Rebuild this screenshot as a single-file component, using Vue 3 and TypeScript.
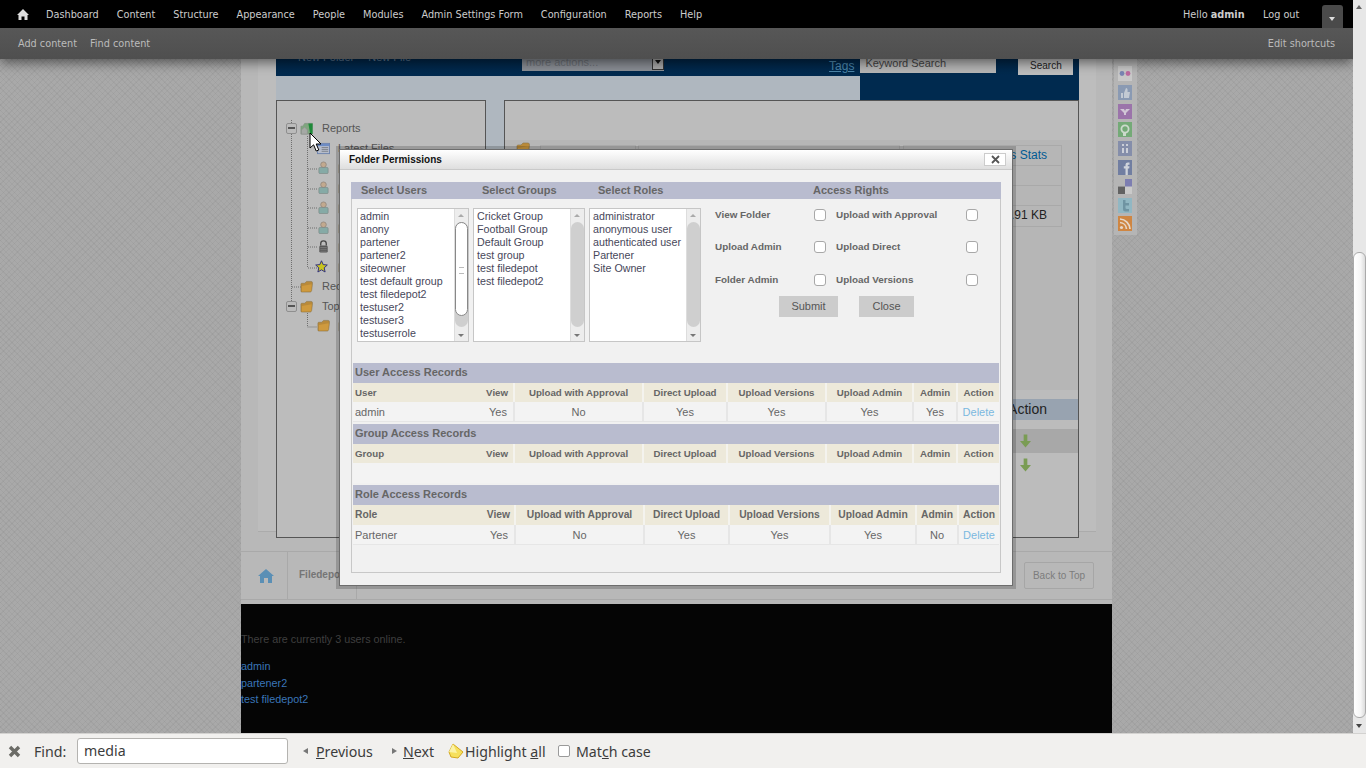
<script setup lang="ts">
const menu = ['Dashboard', 'Content', 'Structure', 'Appearance', 'People', 'Modules', 'Admin Settings Form', 'Configuration', 'Reports', 'Help']
const users = ['admin', 'anony', 'partener', 'partener2', 'siteowner', 'test default group', 'test filedepot2', 'testuser2', 'testuser3', 'testuserrole']
const groups = ['Cricket Group', 'Football Group', 'Default Group', 'test group', 'test filedepot', 'test filedepot2']
const roles = ['administrator', 'anonymous user', 'authenticated user', 'Partener', 'Site Owner']
const lists = [
  { items: users, active: true },
  { items: groups, active: false },
  { items: roles, active: false },
]
const rights = ['View Folder', 'Upload with Approval', 'Upload Admin', 'Upload Direct', 'Folder Admin', 'Upload Versions']
const cols = ['View', 'Upload with Approval', 'Direct Upload', 'Upload Versions', 'Upload Admin', 'Admin', 'Action']
const tables = [
  { cls: 't-user', title: 'User Access Records', first: 'User', row: ['admin', 'Yes', 'No', 'Yes', 'Yes', 'Yes', 'Yes'] },
  { cls: 't-group', title: 'Group Access Records', first: 'Group', row: null },
  { cls: 't-role', title: 'Role Access Records', first: 'Role', row: ['Partener', 'Yes', 'No', 'Yes', 'Yes', 'Yes', 'No'] },
]
const tree = [
  { cls: 'lv0', toggle: true, icon: 'i-report', label: 'Reports' },
  { cls: 'lv1', toggle: false, icon: 'i-list', label: 'Latest Files' },
  { cls: 'lv1', toggle: false, icon: 'i-user', label: '' },
  { cls: 'lv1', toggle: false, icon: 'i-user', label: '' },
  { cls: 'lv1', toggle: false, icon: 'i-user', label: '' },
  { cls: 'lv1', toggle: false, icon: 'i-user', label: '' },
  { cls: 'lv1', toggle: false, icon: 'i-lock', label: '' },
  { cls: 'lv1', toggle: false, icon: 'i-star', label: '' },
  { cls: 'lv0', toggle: false, icon: 'i-folder', label: 'Recent' },
  { cls: 'lv0', toggle: true, icon: 'i-folder', label: 'Top' },
  { cls: 'lv1', toggle: false, icon: 'i-folder', label: '' },
]
const socials = ['s-flickr', 's-like', 's-yahoo', 's-green', 's-blue', 's-fb', 's-del', 's-tw', 's-rss']
</script>

<template>
  <div class="root">
    <svg class="defs" aria-hidden="true">
      <defs>
        <symbol id="i-folder" viewBox="0 0 14 13">
          <path d="M1 4 L1 11.5 Q1 12.5 2 12.5 L11 12.5 Q12 12.5 12.5 11 L13.5 3 Q13.5 1 12 1 L7 1 L5 3 L2 3 Q1 3 1 4Z" fill="#b98a3a" stroke="#8a7448" stroke-width=".6" />
          <path d="M2 6 L12.6 4 L12 11.5 L2 11.8Z" fill="#cf9a3e" />
        </symbol>
        <symbol id="i-user" viewBox="0 0 12 14">
          <circle cx="6" cy="4" r="3" fill="#c2a98f" stroke="#8c8378" stroke-width=".8" />
          <rect x="1" y="7" width="10" height="6.5" rx="1" fill="#86aaa6" stroke="#77827f" stroke-width=".6" />
        </symbol>
        <symbol id="i-lock" viewBox="0 0 12 14">
          <path d="M3 6 V4 a3 3 0 0 1 6 0 V6" fill="none" stroke="#444" stroke-width="1.4" />
          <rect x="1.5" y="6" width="9" height="7.5" rx="1.5" fill="#555" />
          <path d="M2.5 8 H9.5 M2.5 10 H9.5 M2.5 12 H9.5" stroke="#979797" stroke-width=".6" />
        </symbol>
        <symbol id="i-star" viewBox="0 0 13 13">
          <path d="M6.5 .8 L8.2 4.6 L12.3 5 L9.2 7.8 L10.1 12 L6.5 9.8 L2.9 12 L3.8 7.8 L.7 5 L4.8 4.6Z" fill="#c9c41e" stroke="#33337e" stroke-width="1" />
        </symbol>
        <symbol id="i-list" viewBox="0 0 14 12">
          <rect x=".5" y=".5" width="13" height="11" fill="#b5bccb" stroke="#6d83ad" />
          <rect x="1" y="1" width="12" height="2.4" fill="#6d8cc4" />
          <path d="M5 5 H12 M5 7 H12 M5 9 H12" stroke="#6c7076" stroke-width=".8" />
        </symbol>
        <symbol id="i-report" viewBox="0 0 14 13">
          <path d="M1 4 L1 12.5 L13 12.5 L13.5 1 L5 1 L3 4Z" fill="#7ea67e" stroke="#7a8c7a" stroke-width=".6" />
          <path d="M9 1 H13.5 V12.5 H11 Z" fill="#1f8a3a" />
          <path d="M1.5 8 L5 5 L8 8 V12.5 H1.5Z" fill="#a5a9a5" stroke="#8c8c8c" stroke-width=".6" />
        </symbol>
      </defs>
    </svg>

    <div class="viewport">
      <div class="page">
        <div class="col">
          <div class="frame">
            <div class="head">
              <span class="head-link">New Folder</span>
              <span class="head-link second">New File</span>
              <span class="head-select">more actions...<b class="select-arrow"></b></span>
              <a class="tags">Tags</a>
              <span class="keyword">Keyword Search</span>
              <span class="search-btn">Search</span>
            </div>
            <div class="mid">
              <div class="mid-top"><div class="navy-block"></div></div>
              <div class="panels">
                <div class="panel-left">
                  <svg class="tree-lines" width="60" height="240" aria-hidden="true">
                    <g fill="none" stroke="#6f6f6f" stroke-dasharray="1 1">
                      <path d="M14.5 19 V205" />
                      <path d="M30.5 35 V167 M31 68 H40 M31 88 H40 M31 107 H40 M31 127 H40 M31 146 H40 M31 167 H40" />
                      <path d="M15 186 H24 M30.5 212 V226 H40" />
                    </g>
                  </svg>
                  <div v-for="(n, i) in tree" :key="i" class="node" :class="n.cls">
                    <span v-if="n.cls === 'lv0'" class="toggle-slot"><span v-if="n.toggle" class="toggle"></span></span>
                    <svg class="node-icon" :class="n.icon"><use :href="'#' + n.icon" /></svg>
                    <span v-if="n.label" class="node-label">{{ n.label }}</span>
                    <svg v-else-if="n.cls === 'lv1'" class="node-folder"><use href="#i-folder" /></svg>
                  </div>
                </div>
                <div class="panel-right">
                  <div class="files">
                    <div class="file-head">
                      <svg class="file-folder"><use href="#i-folder" /></svg>
                      <span class="c1"></span><span class="c2"></span>
                      <div class="stats">
                        <a class="stat-row">Users Stats</a>
                        <div class="stat-row"></div>
                        <div class="stat-row"></div>
                        <div class="stat-row dark">36.91 KB</div>
                      </div>
                    </div>
                  </div>
                  <div class="actions">
                    <div class="action-head"><span>Action</span></div>
                    <div class="action-row hl"><svg class="arrow" viewBox="0 0 12 14"><path d="M4 0 H8 V7 H12 L6 14 L0 7 H4Z" fill="#7a9c54" /></svg></div>
                    <div class="action-row"><svg class="arrow" viewBox="0 0 12 14"><path d="M4 0 H8 V7 H12 L6 14 L0 7 H4Z" fill="#7a9c54" /></svg></div>
                  </div>
                </div>
              </div>
            </div>
          </div>

          <div class="footbar">
            <div class="foot-home">
              <svg width="16" height="14" viewBox="0 0 16 14"><path d="M8 0 L16 7 H14 V14 H10 V9 H6 V14 H2 V7 H0Z" fill="#5a8fb5" /></svg>
            </div>
            <div class="foot-crumb">Filedepot</div>
            <span class="back-top">Back to Top</span>
          </div>

          <div class="black">
            <p class="online">There are currently 3 users online.</p>
            <a class="user-link">admin</a>
            <a class="user-link">partener2</a>
            <a class="user-link">test filedepot2</a>
          </div>
        </div>

        <div class="social">
          <svg v-for="s in socials" :key="s" class="soc" viewBox="0 0 14 15">
            <template v-if="s === 's-flickr'">
              <rect width="14" height="15" fill="#cfcfcf" /><circle cx="4" cy="7.5" r="2.4" fill="#6a79b4" /><circle cx="10" cy="7.5" r="2.4" fill="#c0569b" />
            </template>
            <template v-else-if="s === 's-like'">
              <rect width="14" height="15" fill="#7f93b3" /><path d="M3 8 H5 V13 H3Z M6 8 L8 3 Q10 3 9.5 7 H12 L11 13 H6Z" fill="#c7d0dc" />
            </template>
            <template v-else-if="s === 's-yahoo'">
              <rect width="14" height="15" fill="#9463a8" /><path d="M2 5 H6 L7 7 L8 5 H12 L8 9 V11 H6 V9Z" fill="#d9cde0" />
            </template>
            <template v-else-if="s === 's-green'">
              <rect width="14" height="15" fill="#62a866" /><circle cx="7" cy="7" r="3.6" fill="none" stroke="#d3e5d3" stroke-width="1.8" /><path d="M5 11 H8 V14 H5Z" fill="#d3e5d3" />
            </template>
            <template v-else-if="s === 's-blue'">
              <rect width="14" height="15" fill="#7884a8" /><path d="M4 3 H6 V5 H4Z M8 3 H10 V5 H8Z M4 7 H6 V12 H4Z M8 7 H10 V12 H8Z" fill="#d3d7e2" />
            </template>
            <template v-else-if="s === 's-fb'">
              <rect width="14" height="15" fill="#5e6f9c" /><path d="M7.5 15 V8.5 H5.8 V6.2 H7.5 V4.5 Q7.5 2.5 9.8 2.5 H11.5 V4.7 H10.4 Q9.8 4.7 9.8 5.3 V6.2 H11.5 L11.2 8.5 H9.8 V15Z" fill="#d7dce6" />
            </template>
            <template v-else-if="s === 's-del'">
              <rect width="14" height="15" fill="#d0d0d0" /><rect x="7" width="7" height="7.5" fill="#6e6fb0" /><rect y="0" width="7" height="7.5" fill="#b5b5b5" /><rect y="7.5" width="7" height="7.5" fill="#4c4c4c" />
            </template>
            <template v-else-if="s === 's-tw'">
              <rect width="14" height="15" fill="#88b8c8" /><path d="M5 2 H7.5 V5 H11 V7.5 H7.5 V10 Q7.5 11 9 11 H11 V13.5 H7.5 Q5 13.5 5 11Z" fill="#5c8c9e" />
            </template>
            <template v-else>
              <rect width="14" height="15" fill="#d77a22" /><circle cx="3.5" cy="11.5" r="1.6" fill="#f5e3d0" /><path d="M2 6.5 A7 7 0 0 1 8.5 13 M2 3 A10.5 10.5 0 0 1 12 13" fill="none" stroke="#f5e3d0" stroke-width="1.7" />
            </template>
          </svg>
        </div>

        <header class="toolbar">
          <div class="bar-top">
            <svg class="home" width="12" height="11" viewBox="0 0 12 11"><path d="M6 0 L12 6 H10.5 V11 H7.5 V7.5 H4.5 V11 H1.5 V6 H0Z" fill="#ddd" /></svg>
            <nav class="menu"><a v-for="m in menu" :key="m">{{ m }}</a></nav>
            <span class="hello">Hello <b>admin</b></span>
            <a class="logout">Log out</a>
            <span class="drawer"><i></i></span>
          </div>
          <div class="bar-sub">
            <a>Add content</a>
            <a>Find content</a>
            <a class="edit">Edit shortcuts</a>
          </div>
        </header>

        <section class="modal">
          <div class="m-title">
            <span>Folder Permissions</span>
            <span class="m-close">
              <svg width="9" height="9" viewBox="0 0 9 9"><path d="M1 1 L8 8 M8 1 L1 8" stroke="#555" stroke-width="1.8" /></svg>
            </span>
          </div>
          <div class="fieldset">
            <div class="sel-head">
              <span class="h1">Select Users</span>
              <span class="h2">Select Groups</span>
              <span class="h3">Select Roles</span>
              <span class="h4">Access Rights</span>
            </div>
            <div class="form">
              <div v-for="(l, i) in lists" :key="i" class="listbox" :class="{ 'lb-users': i === 0 }">
                <ul>
                  <li v-for="it in l.items" :key="it">{{ it }}</li>
                </ul>
                <div class="sb">
                  <span class="sb-btn up"></span>
                  <span class="sb-track" :class="{ active: l.active }"><span class="sb-thumb"></span></span>
                  <span class="sb-btn down"></span>
                </div>
              </div>
              <div class="rights">
                <div class="rights-grid">
                  <template v-for="r in rights" :key="r">
                    <label>{{ r }}</label>
                    <input type="checkbox" />
                  </template>
                </div>
                <div class="btns">
                  <span class="btn">Submit</span>
                  <span class="btn close">Close</span>
                </div>
              </div>
            </div>
            <div class="records">
              <div v-for="t in tables" :key="t.title" class="record" :class="t.cls">
                <div class="rec-title">{{ t.title }}</div>
                <table>
                  <colgroup><col /><col /><col /><col /><col /><col /><col /></colgroup>
                  <thead>
                    <tr>
                      <th class="first"><span class="fname">{{ t.first }}</span><span class="view">{{ cols[0] }}</span></th>
                      <th v-for="c in cols.slice(1)" :key="c">{{ c }}</th>
                    </tr>
                  </thead>
                  <tbody>
                    <tr v-if="t.row">
                      <td class="first"><span class="fname">{{ t.row[0] }}</span><span class="view">{{ t.row[1] }}</span></td>
                      <td>{{ t.row[2] }}</td>
                      <td>{{ t.row[3] }}</td>
                      <td>{{ t.row[4] }}</td>
                      <td>{{ t.row[5] }}</td>
                      <td>{{ t.row[6] }}</td>
                      <td><a class="del">Delete</a></td>
                    </tr>
                    <tr v-else class="empty"><td colspan="7"></td></tr>
                  </tbody>
                </table>
              </div>
            </div>
          </div>
        </section>

        <svg class="cursor" width="14" height="21" viewBox="0 0 14 21">
          <path d="M1 1 V16 L4.6 12.8 L7.2 19 L9.8 18 L7.2 12 H12Z" fill="#fff" stroke="#000" stroke-width="1" />
        </svg>
      </div>

      <div class="vscroll">
        <span class="vs-btn"><i class="up-tri"></i></span>
        <span class="vs-track"><span class="vs-thumb"></span></span>
        <span class="vs-btn"><i class="down-tri"></i></span>
      </div>
    </div>

    <footer class="findbar">
      <svg class="fx" width="13" height="13" viewBox="0 0 13 13"><path d="M2 2 L11 11 M11 2 L2 11" stroke="#6b6b66" stroke-width="3.4" /></svg>
      <span class="find-label">Find:</span>
      <span class="find-input">media</span>
      <i class="tri-l"></i>
      <span class="fb p"><u>P</u>revious</span>
      <i class="tri-r"></i>
      <span class="fb n"><u>N</u>ext</span>
      <svg class="hl" width="17" height="17" viewBox="0 0 17 17"><path d="M5 1 L15 9 L10 15 L3 14 L1 9Z" fill="#f6e05c" stroke="#d4a820" stroke-width="1" /><path d="M5 1 L1 9 L9 10Z" fill="#fbf3a8" /></svg>
      <span class="fb h">Highlight <u>a</u>ll</span>
      <span class="fcheck"></span>
      <span class="fb m">Mat<u>c</u>h case</span>
    </footer>
  </div>
</template>

<style>
html, body { margin: 0; overflow: hidden; }
</style>

<style scoped>
.root { width: 1366px; height: 768px; display: flex; flex-direction: column; overflow: hidden; font-family: "Liberation Sans", Arial, sans-serif; color: #666; }
.defs { width: 0; height: 0; position: absolute; }
a { cursor: pointer; }
.viewport { height: 733px; display: flex; }
.page {
  position: relative; width: 1353px; height: 733px; display: flex; padding-left: 241px; box-sizing: border-box; overflow: hidden;
  background-color: #a9a9a9;
  background-image: repeating-linear-gradient(45deg, rgba(0,0,0,.035) 0 1px, transparent 1px 4px), repeating-linear-gradient(-45deg, rgba(0,0,0,.035) 0 1px, transparent 1px 4px);
}
.col { width: 871px; height: 733px; display: flex; flex-direction: column; background: #b8b8b8; flex: none; }
.frame { height: 532px; margin: 0 16px 0 17px; padding: 0 17px 0 18px; background: #bdbdbd; border-bottom: 1px solid #ababab; box-sizing: border-box; flex: none; }
.head { height: 76px; width: 803px; background: linear-gradient(#021a33, #002a4f); display: flex; align-items: flex-end; position: relative; font-size: 11px; color: #5d7690; box-sizing: border-box; }
.head-link { margin: 0 0 13px 22px; }
.head-link.second { margin-left: 14px; }
.head-select { width: 142px; height: 16px; margin: 0 0 5px 111px; background: #8b8f96; color: #6d7178; font-size: 11px; line-height: 14px; padding-left: 4px; box-sizing: border-box; position: relative; }
.select-arrow { position: absolute; right: 0; top: 0; width: 12px; height: 15px; background: #a9a9a9; border: 1px solid #333; border-top: 0; box-sizing: border-box; }
.select-arrow::after { content: ""; position: absolute; left: 2px; top: 5px; border: 3px solid transparent; border-top: 4px solid #111; }
.tags { margin: 0 6px 3px 165px; color: #4c86ab; text-decoration: underline; font-size: 12px; }
.keyword { width: 136px; height: 20px; margin-bottom: 3px; background: #b7b7b7; color: #444; font-size: 11px; line-height: 20px; box-sizing: border-box; padding: 0 5px; }
.search-btn { width: 55px; height: 22px; margin: 0 0 1px 22px; background: #bdbdbd; color: #222; font-size: 10px; line-height: 24px; text-align: center; border-top: 1px solid #ddd; box-sizing: border-box; }
.mid { height: 462px; width: 803px; background: #afb7bf; display: flex; flex-direction: column; position: relative; }
.mid-top { height: 24px; display: flex; justify-content: flex-end; flex: none; }
.navy-block { width: 219px; background: #002a4f; }
.panels { height: 438px; display: flex; gap: 18px; flex: none; }
.panel-left { width: 210px; border: 1px solid #555; background: #bcbcbc; box-sizing: border-box; padding-top: 17.5px; position: relative; }
.tree-lines { position: absolute; left: 0; top: 0; }
.node { height: 19.75px; display: flex; align-items: center; position: relative; font-size: 11px; color: #555; white-space: nowrap; }
.node.lv0 { padding-left: 9px; }
.node.lv1 { padding-left: 40px; }
.toggle-slot { width: 11px; height: 11px; margin-right: 3px; flex: none; }
.toggle { display: block; width: 11px; height: 11px; background: #bbb; border: 1px solid #8f8f8f; border-radius: 2px; box-sizing: border-box; position: relative; }
.toggle::after { content: ""; position: absolute; left: 1px; right: 1px; top: 3.5px; height: 2px; background: #555; }
.node-icon { width: 13px; height: 13px; flex: none; }
.node-icon.i-star { margin-left: -2px; margin-right: 2px; }
.node-label { margin-left: 9px; }
.lv1 .node-label { margin-left: 8px; }
.lv0 .node-label { margin-left: 9px; }
.node-folder { width: 14px; height: 13px; margin-left: 8px; flex: none; }
.panel-right { width: 575px; border: 1px solid #555; background: #bcbcbc; box-sizing: border-box; padding-top: 39px; }
.files { height: 250px; background: #b6b6b6; box-sizing: border-box; padding: 2px 16px 0 11px; }
.file-head { display: flex; align-items: flex-start; }
.file-folder { width: 14px; height: 13px; flex: none; margin-right: 10px; }
.c1 { width: 96px; height: 21px; margin-top: 3px; background: #b8b8b8; border: 1px solid #a9a9a9; box-sizing: border-box; flex: none; }
.c2 { width: 262px; height: 21px; margin: 3px 3px 0 2px; background: #b8b8b8; border: 1px solid #a9a9a9; box-sizing: border-box; flex: none; }
.stats { width: 159px; margin-top: 3px; flex: none; border: 1px solid #a9a9a9; box-sizing: border-box; }
.stat-row { display: block; height: 20px; border-bottom: 1px solid #a9a9a9; text-align: right; padding-right: 14px; font-size: 12px; line-height: 19px; color: #005a93; white-space: nowrap; box-sizing: border-box; }
.stat-row.dark { color: #222; border-bottom: 0; font-size: 12px; line-height: 18px; }
.actions { padding-top: 9px; }
.action-head { height: 21px; background: #98a3b0; font-size: 14px; line-height: 21px; color: #222; text-align: right; padding-right: 31px; margin-bottom: 9px; }
.action-row { height: 24px; display: flex; justify-content: flex-end; align-items: center; padding-right: 47px; }
.action-row.hl { background: #a8a8a8; }
.arrow { width: 11px; height: 14px; }
.footbar { margin-top: 19px; height: 49px; border-top: 1px solid #a9a9a9; border-bottom: 1px solid #a9a9a9; display: flex; align-items: stretch; flex: none; box-sizing: border-box; }
.foot-home { width: 47px; padding-left: 4px; border-right: 1px solid #a9a9a9; display: flex; align-items: center; justify-content: center; box-sizing: border-box; }
.foot-crumb { width: 69px; border-right: 1px solid #a9a9a9; font-size: 10px; font-weight: bold; color: #757575; padding: 17px 0 0 11px; box-sizing: border-box; white-space: nowrap; overflow: hidden; }
.back-top { margin: 10px 18px 0 auto; width: 70px; height: 27px; border: 1px solid #a6a6a6; border-radius: 2px; font-size: 10px; line-height: 25px; text-align: center; color: #7c7c7c; box-sizing: border-box; }
.black { margin-top: 4px; flex: 1; background: #050505; font-size: 10.8px; color: #3f3f3f; padding-top: 28px; }
.online { margin: 0 0 12px; line-height: 14px; }
.user-link { display: block; color: #3a76b8; line-height: 16.5px; }
.social { width: 23px; height: 235px; margin-left: 2px; background: #b5b5b5; padding: 66px 0 0 4px; box-sizing: border-box; display: flex; flex-direction: column; gap: 3.8px; flex: none; }
.soc { width: 14px; height: 15px; flex: none; opacity: .78; }
.toolbar { position: absolute; left: 0; top: 0; width: 100%; z-index: 5; font-family: "DejaVu Sans Condensed", "DejaVu Sans", sans-serif; font-size: 10.8px; color: #ccc; box-shadow: 0 3px 12px rgba(0,0,0,.55); font-stretch: condensed; }
.bar-top { height: 28px; background: #000; display: flex; align-items: center; padding-left: 17px; position: relative; }
.home { margin-right: 17px; flex: none; }
.menu { display: flex; gap: 18px; white-space: nowrap; }
.hello { position: absolute; left: 1183px; }
.logout { position: absolute; left: 1263px; }
.drawer { position: absolute; left: 1322px; top: 5px; width: 21px; height: 23px; background: #4a4a4a; border-radius: 3px 3px 0 0; }
.drawer i { position: absolute; left: 7px; top: 12px; border: 3px solid transparent; border-top: 4px solid #ddd; }
.bar-sub { height: 31px; padding: 0 18px 1px; box-sizing: border-box; background: linear-gradient(#575757, #4f4f4f); display: flex; align-items: center; gap: 13px; color: #bbb; }
.edit { margin-left: auto; }
.modal { position: absolute; left: 340px; top: 150px; width: 672px; height: 435px; background: #f1f1f1; z-index: 3; box-shadow: 0 0 0 1px #6d6d6d, 0 0 0 4px rgba(0,0,0,.18); display: flex; flex-direction: column; }
.m-title { height: 20px; flex: none; background: linear-gradient(#fff, #dedede); border-bottom: 1px solid #c9c9c9; box-sizing: border-box; display: flex; align-items: center; justify-content: space-between; padding: 0 6px 0 9px; font-size: 10px; font-weight: bold; color: #111; }
.m-close { width: 22px; height: 13px; background: #fff; border: 1px solid #ccc; box-sizing: border-box; display: flex; align-items: center; justify-content: center; }
.fieldset { margin: 12px 11px 12px; height: 391px; border: 1px solid #c8c8c8; border-top-width: 0; box-sizing: border-box; flex: none; }
.sel-head { height: 17px; background: #b9bccf; display: flex; font-size: 11px; font-weight: bold; color: #666; line-height: 16px; margin: 0 -1px; padding-left: 10px; }
.h1 { width: 121px; } .h2 { width: 116px; } .h3 { width: 215px; }
.form { display: flex; gap: 4px; padding: 9px 0 0 5px; height: 155px; box-sizing: border-box; }
.listbox { width: 112px; height: 134px; background: #fff; border: 1px solid #c6c6c6; box-sizing: border-box; display: flex; flex: none; }
.listbox ul { flex: 1; min-width: 0; overflow: hidden; margin: 0; padding: 1px 0 0 3px; list-style: none; font-size: 10.7px; line-height: 13px; color: #47475a; white-space: nowrap; }
.listbox.lb-users ul { padding-left: 2px; }
.sb { width: 14px; margin: 0; display: flex; flex-direction: column; flex: none; background: #ededed; border-left: 1px solid #ddd; box-sizing: border-box; }
.sb-btn { height: 13px; position: relative; flex: none; }
.sb-btn::after { content: ""; position: absolute; left: 3px; border: 3px solid transparent; }
.sb-btn.up::after { top: 2px; border-bottom: 3px solid #aaa; }
.sb-btn.down::after { top: 6px; border-top: 3px solid #777; }
.sb-track { flex: 1; background: #cfcfcf; border-radius: 7px; display: block; margin-bottom: 1px; }
.sb-thumb { display: none; }
.sb-track.active .sb-thumb { display: block; height: 94px; background: #fff; border: 1px solid #888; border-radius: 7px; box-sizing: border-box; position: relative; }
.sb-track.active .sb-thumb::after { content: ""; position: absolute; left: 3px; right: 3px; top: 44px; height: 5px; border-top: 1px solid #bbb; border-bottom: 1px solid #bbb; }
.rights { margin-left: 10px; width: 263px; padding-top: 0; }
.rights-grid { display: grid; grid-template-columns: 99px 22px 130px 13px; grid-template-rows: 32px 32px 34px; align-items: center; font-size: 9.9px; font-weight: bold; color: #666; margin-top: -9px; padding-top: 0; }
.rights-grid label { line-height: 14px; white-space: nowrap; }
.rights-grid input { appearance: none; -webkit-appearance: none; width: 12px; height: 12px; margin: 0; background: #fff; border: 1px solid #a8a8a8; border-radius: 3px; box-sizing: border-box; }
.btns { display: flex; justify-content: center; gap: 21px; margin-top: -1px; }
.btn { width: 59px; height: 21px; background: #ccc; font-size: 11px; line-height: 21px; text-align: center; color: #555; }
.btn.close { width: 55px; }
.records { padding: 9px 1px 0 1px; }
.record { width: 646px; }
.rec-title { height: 20px; background: #b9bccf; font-size: 11px; font-weight: bold; line-height: 19px; color: #666; padding-left: 2px; }
table { width: 646px; table-layout: fixed; border-collapse: collapse; }
th { height: 19px; padding: 0; background: #ede9da; border-right: 2px solid #f4f3ee; font-size: 9.7px; font-weight: bold; color: #666; text-align: center; box-sizing: border-box; white-space: nowrap; }
td { height: 19px; padding: 1px 0 0; background: #f3f3f3; border-right: 2px solid #e6e6e6; border-bottom: 1px solid #e6e6e6; font-size: 11px; color: #666; text-align: center; box-sizing: border-box; }
th:last-child, td:last-child { border-right: 0; }
.first { text-align: left; padding: 0 5px 0 2px; }
td.first { padding-top: 1px; }
.first .fname { float: left; }
.first .view { float: right; }
td.first .view { padding-right: 1px; }
.del { color: #7ab8e0; }
.empty td { height: 20px; border-right: 0; border-bottom: 0; }
.t-user col:nth-child(1), .t-group col:nth-child(1) { width: 161px; }
.t-user col:nth-child(2), .t-group col:nth-child(2) { width: 129px; }
.t-user col:nth-child(3), .t-group col:nth-child(3) { width: 84px; }
.t-user col:nth-child(4), .t-group col:nth-child(4) { width: 99px; }
.t-user col:nth-child(5), .t-group col:nth-child(5) { width: 87px; }
.t-user col:nth-child(6), .t-group col:nth-child(6) { width: 44px; }
.t-role col:nth-child(1) { width: 162px; }
.t-role col:nth-child(2) { width: 129px; }
.t-role col:nth-child(3) { width: 85px; }
.t-role col:nth-child(4) { width: 101px; }
.t-role col:nth-child(5) { width: 86px; }
.t-role col:nth-child(6) { width: 42px; }
.t-user { margin-bottom: 2px; }
.t-group { margin-bottom: 2px; }
.t-role th { height: 20px; font-size: 10.3px; }
.t-role th.first { padding-right: 4px; }
.t-role td { height: 20px; }
.cursor { position: absolute; left: 309px; top: 132px; z-index: 4; }
.vscroll { width: 13px; height: 733px; background: #e7e7e7; display: flex; flex-direction: column; flex: none; }
.vs-btn { height: 15px; flex: none; position: relative; }
.vs-btn i { position: absolute; left: 3px; border: 3.5px solid transparent; }
.up-tri { top: 2px; border-bottom: 4px solid #666 !important; }
.down-tri { top: 6px; border-top: 4px solid #444 !important; }
.vs-track { flex: 1; padding-top: 237px; padding-bottom: 0; display: block; }
.vs-thumb { display: block; height: 466px; background: linear-gradient(90deg, #fff, #f6f6f6 60%, #dcdcdc); border: 1px solid #aaa; border-radius: 6px; box-sizing: border-box; }
.findbar { height: 35px; flex: none; background: #f1f0ee; border-top: 1px solid #d3d2d0; box-sizing: border-box; display: flex; align-items: center; font-family: "Noto Sans", "Open Sans", sans-serif; font-size: 14.2px; color: #3c3c3c; position: relative; }
.fx { margin-left: 8px; flex: none; }
.find-label { margin-left: 13px; width: 43px; flex: none; }
.find-input { width: 211px; height: 26px; background: #fff; border: 1px solid #b4b3b0; border-radius: 3px; box-sizing: border-box; padding-left: 6px; line-height: 24px; flex: none; }
.tri-l { margin-left: 15px; border: 3.5px solid transparent; border-right: 5px solid #777; border-left: 0; flex: none; }
.fb { white-space: nowrap; flex: none; }
.fb.p { margin-left: 8px; width: 63px; }
.tri-r { margin-left: 13px; border: 3.5px solid transparent; border-left: 5px solid #777; border-right: 0; flex: none; }
.fb.n { margin-left: 6px; width: 33px; }
.hl { margin-left: 12px; flex: none; }
.fb.h { width: 80px; }
.fcheck { margin-left: 13px; width: 12px; height: 12px; background: #fff; border: 1px solid #9a9a9a; border-radius: 2px; box-sizing: border-box; flex: none; }
.fb.m { margin-left: 6px; }
</style>
